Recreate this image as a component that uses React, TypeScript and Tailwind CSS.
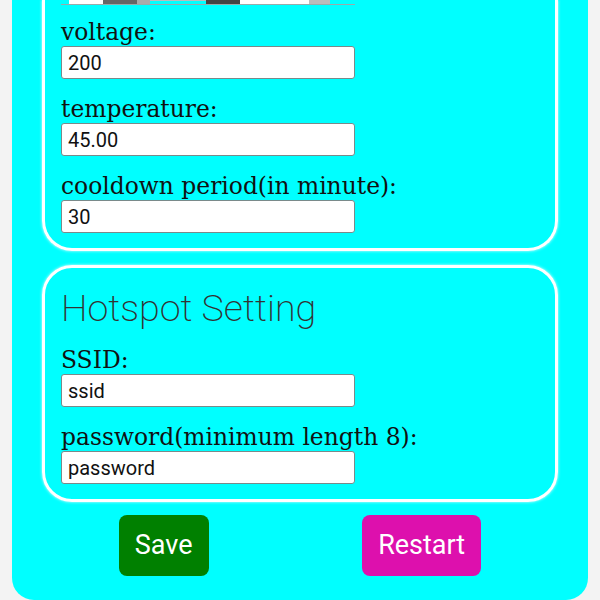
const serif = { fontFamily: '"DejaVu Serif", "Liberation Serif", serif' };

function Field({ label, value }: { label: string; value: string }) {
  return (
    <div className="mb-[16px] last:mb-0">
      <div className="text-[23.4px] leading-[28px] text-[#111]">{label}</div>
      <input
        defaultValue={value}
        className="block h-[33px] w-[294px] rounded-[3px] border border-[#7a8a8a] bg-white px-[6px] text-[20px] text-[#111] font-['Roboto',sans-serif] outline-none"
      />
    </div>
  );
}

export default function App() {
  return (
    <div className="min-h-[600px] bg-[#f3f3f3]">
      <div className="mx-3 rounded-b-[22px] bg-[#00ffff] px-[30px] pb-[24px]">
        {/* first card, top scrolled out of view */}
        <div className="rounded-b-[30px] border-[3px] border-t-0 border-white px-[16px] pb-[15px] shadow-[0_0_3px_rgba(255,255,255,0.9)]">
          <div className="flex h-[5px] w-[294px] items-start border-b border-[#9aa]">
            <div className="h-full w-[8px]" />
            <div className="h-full w-[34px] bg-white" />
            <div className="h-full w-[34px] bg-[#666]" />
            <div className="h-full w-[13px] bg-[#aaa]" />
            <div className="h-[1px] w-[56px] bg-[#bbb]" />
            <div className="h-full w-[34px] bg-[#444]" />
            <div className="h-full w-[69px] bg-white" />
            <div className="h-full w-[21px] bg-[#bbb]" />
          </div>
          <div className="mt-[13px]" style={serif}>
            <Field label="voltage:" value="200" />
            <Field label="temperature:" value="45.00" />
            <Field label="cooldown period(in minute):" value="30" />
          </div>
        </div>

        <div className="mt-[14px] rounded-[30px] border-[3px] border-white px-[16px] pt-[19px] pb-[15px] shadow-[0_0_3px_rgba(255,255,255,0.9)]">
          <h2 className="mb-[17px] text-[37.6px] leading-[42px] font-extralight text-[#333] font-['Roboto',sans-serif]">
            Hotspot Setting
          </h2>
          <div style={serif}>
            <Field label="SSID:" value="ssid" />
            <Field label="password(minimum length 8):" value="password" />
          </div>
        </div>

        <div className="mt-[13px] flex justify-around font-['Roboto',sans-serif]">
          <button className="h-[61px] rounded-[8px] bg-[#008000] px-[16px] text-[27px] text-white">Save</button>
          <button className="h-[61px] rounded-[8px] bg-[#dd10ad] px-[16px] text-[27px] text-white">Restart</button>
        </div>
      </div>
    </div>
  );
}
